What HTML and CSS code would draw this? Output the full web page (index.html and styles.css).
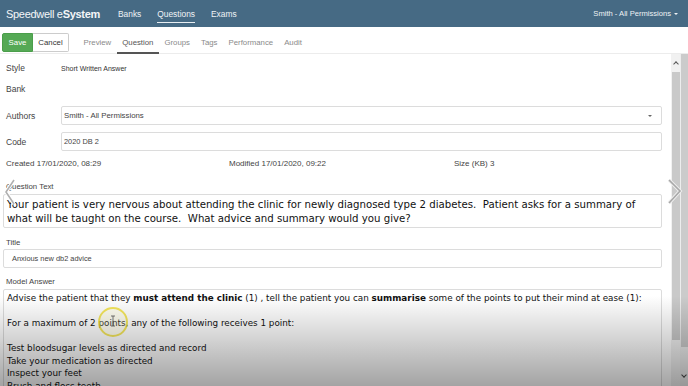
FILE: index.html
```html
<!DOCTYPE html>
<html lang="en">

<head>
    <meta charset="UTF-8">
    <meta name="viewport" content="width=device-width, initial-scale=1.0">
    <title>Speedwell eSystem - Question</title>
    <link rel="stylesheet" href="styles.css">
</head>

<body>
    <header class="navbar">
        <div class="brand">Speedwell <span class="brand-e">e</span><b>System</b></div>
        <nav class="nav-links">
            <a>Banks</a>
            <a class="active">Questions</a>
            <a>Exams</a>
        </nav>
        <div class="user">Smith - All Permissions <span class="caret"></span></div>
    </header>

    <div class="toolbar">
        <div class="btn-group">
            <button class="btn btn-save">Save</button>
            <button class="btn btn-cancel">Cancel</button>
        </div>
        <ul class="tabs">
            <li>Preview</li>
            <li class="active">Question</li>
            <li>Groups</li>
            <li>Tags</li>
            <li>Performance</li>
            <li>Audit</li>
        </ul>
    </div>

    <div class="main">
        <div class="content">
            <div class="row row-style">
                <span class="label">Style</span>
                <span class="value">Short Written Answer</span>
            </div>
            <div class="row row-bank">
                <span class="label">Bank</span>
            </div>
            <div class="row row-field">
                <span class="label">Authors</span>
                <div class="control select">Smith - All Permissions <span class="select-caret"></span></div>
            </div>
            <div class="row row-field">
                <span class="label">Code</span>
                <div class="control">2020 DB 2</div>
            </div>
            <div class="meta">
                <span>Created 17/01/2020, 08:29</span>
                <span>Modified 17/01/2020, 09:22</span>
                <span>Size (KB) 3</span>
            </div>

            <div class="block-label">Question Text</div>
            <div class="editor question-text">Your patient is very nervous about attending the clinic for newly diagnosed type 2 diabetes.&nbsp; Patient asks for a summary of what will be taught on the course.&nbsp; What advice and summary would you give?</div>

            <div class="block-label title-label">Title</div>
            <div class="control wide">Anxious new db2 advice</div>

            <div class="block-label answer-label">Model Answer</div>
            <div class="editor model-answer">
                <p>Advise the patient that they <b>must attend the clinic</b> (1) , tell the patient you can <b>summarise</b> some of the points to put their mind at ease (1):</p>
                <p>For a maximum of 2 points, any of the following receives 1 point:</p>
                <p>Test bloodsugar levels as directed and record<br>Take your medication as directed<br>Inspect your feet<br>Brush and floss teeth</p>
            </div>
        </div>
        <div class="scroll-inner">
            <span class="arrow-up"></span>
            <div class="thumb"></div>
        </div>
        <div class="scroll-outer">
            <div class="thumb"></div>
            <span class="arrow-down"></span>
        </div>
    </div>

    <!-- video overlays -->
    <svg class="chevron chevron-left" width="14" height="28" viewBox="0 0 14 28">
        <polyline points="11,2 3,14 11,26" fill="none" stroke="#fff" stroke-width="3.5" />
        <polyline points="11,2 3,14 11,26" fill="none" stroke="#b0b0b0" stroke-width="1.6" />
    </svg>
    <svg class="chevron chevron-right" width="16" height="28" viewBox="0 0 16 28">
        <polyline points="2,2 13,13 2,25" fill="none" stroke="#eee" stroke-width="3.5" />
        <polyline points="2,2 13,13 2,25" fill="none" stroke="#a8a8a8" stroke-width="1.6" />
    </svg>
    <svg class="cursor-ring" width="34" height="34" viewBox="0 0 34 34">
        <circle cx="17" cy="17" r="14" fill="rgba(255,250,170,0.18)" stroke="rgba(240,222,40,0.75)" stroke-width="2" />
        <path d="M15 11h4M17 11v10M15 21h4" stroke="#555" stroke-width="0.8" fill="none" />
    </svg>
    <div class="shade"></div>
</body>

</html>
```

FILE: styles.css
```css
* {
    box-sizing: border-box;
}

body {
    margin: 0;
    width: 688px;
    height: 386px;
    overflow: hidden;
    position: relative;
    font-family: "Liberation Sans", Arial, sans-serif;
    color: #333;
    background: #fff;
}

/* top bar */
.navbar {
    height: 27px;
    background-color: #466a84;
    display: flex;
    align-items: center;
    padding: 0 10px 0 6px;
    color: #fff;
}

.brand {
    font-size: 11px;
    letter-spacing: -0.3px;
    width: 112px;
    color: #f4f6f8;
}

.brand-e {
    font-weight: normal;
}

.nav-links {
    display: flex;
    gap: 16px;
    font-size: 8.4px;
    height: 27px;
    align-items: center;
}

.nav-links a {
    position: relative;
    color: #f0f3f6;
}

.nav-links a.active::after {
    content: "";
    position: absolute;
    left: 0;
    right: 0;
    top: 13px;
    height: 1px;
    background: #e8eef2;
}

.user {
    margin-left: auto;
    font-size: 7.6px;
    color: #eef2f5;
    display: flex;
    align-items: center;
    gap: 3px;
}

.caret {
    border-left: 2.5px solid transparent;
    border-right: 2.5px solid transparent;
    border-top: 2.5px solid #eef2f5;
}

/* toolbar */
.toolbar {
    height: 27px;
    display: flex;
    align-items: center;
    padding: 4px 0 0 2px;
    border-bottom: 1px solid #ececec;
}

.btn-group {
    display: flex;
}

.btn {
    height: 19px;
    font-family: "Liberation Sans", Arial, sans-serif;
    font-size: 7.8px;
    border: 1px solid #ccc;
    margin: 0;
    padding: 0;
}

.btn-save {
    width: 31px;
    background: #55a955;
    border-color: #4b9e4b;
    color: #fff;
    border-radius: 2px 0 0 2px;
}

.btn-cancel {
    width: 36px;
    background: #fff;
    color: #333;
    border-radius: 0 2px 2px 0;
    border-left: none;
}

.tabs {
    display: flex;
    list-style: none;
    margin: 0 0 0 9px;
    padding: 0;
    height: 23px;
    font-size: 7.8px;
    color: #8a8a8a;
}

.tabs li {
    padding: 0 5.5px;
    display: flex;
    align-items: center;
    height: 23px;
}

.tabs li.active {
    color: #555;
    border-bottom: 2px solid #555;
    padding-top: 2px;
}

/* main area */
.main {
    display: flex;
    height: 332px;
}

.content {
    width: 671px;
    padding: 0 9px 0 3px;
    font-size: 8.5px;
    color: #444;
}

.row {
    display: flex;
    align-items: center;
}

.label {
    width: 58px;
    padding-left: 3px;
    flex-shrink: 0;
}

.value {
    font-size: 7px;
    color: #333;
}

.row-style {
    height: 20px;
    margin-top: 4px;
}

.row-bank {
    height: 20px;
    margin-top: 1px;
}

.row-field {
    margin-top: 7px;
}

.control {
    flex: 1;
    height: 19px;
    border: 1px solid #dcdcdc;
    border-radius: 2px;
    display: flex;
    align-items: center;
    padding-left: 2px;
    font-size: 7.4px;
    color: #444;
    background: #fff;
}

.select {
    font-size: 7.8px;
}

.select-caret {
    margin-left: auto;
    margin-right: 9px;
    border-left: 2.5px solid transparent;
    border-right: 2.5px solid transparent;
    border-top: 2.5px solid #666;
}

.control.wide {
    padding-left: 8px;
    margin-top: 1px;
}

.meta {
    display: grid;
    grid-template-columns: 223px 225px 1fr;
    padding-left: 3px;
    height: 16px;
    margin-top: 4px;
    align-items: center;
    font-size: 8px;
}

.block-label {
    height: 12px;
    margin-top: 9px;
    padding-left: 3px;
    display: flex;
    align-items: center;
    font-size: 7.8px;
}

.title-label {
    margin-top: 8px;
}

.answer-label {
    margin-top: 7px;
}

.editor {
    border: 1px solid #dcdcdc;
    border-radius: 2px;
    font-family: "DejaVu Sans", Verdana, sans-serif;
    color: #111;
    padding: 3px 3px;
    margin-top: 2px;
    white-space: nowrap;
}

.question-text {
    height: 34px;
    font-size: 10.2px;
    line-height: 14px;
    padding-top: 3px;
    white-space: normal;
}

.model-answer {
    height: 110px;
    font-size: 8.8px;
    line-height: 12.5px;
    padding-top: 2px;
}

.model-answer p {
    margin: 0 0 12.5px;
}

/* scrollbars */
.scroll-inner {
    width: 9px;
    background: #f1f1f1;
    display: flex;
    flex-direction: column;
    align-items: center;
}

.scroll-inner .thumb {
    width: 8px;
    height: 268px;
    background: #c9c9c9;
    margin-top: 6px;
}

.arrow-up {
    margin-top: 8px;
    width: 4px;
    height: 4px;
    border-left: 1.3px solid #555;
    border-top: 1.3px solid #555;
    transform: rotate(45deg);
}

.scroll-outer {
    width: 8px;
    background: #ededed;
    display: flex;
    flex-direction: column;
    align-items: center;
}

.scroll-outer .thumb {
    width: 7px;
    height: 293px;
    background: #cbcbcb;
}

.arrow-down {
    margin-top: 26px;
    width: 4px;
    height: 4px;
    border-right: 1.3px solid #444;
    border-bottom: 1.3px solid #444;
    transform: rotate(45deg);
}

/* overlays from the recording */
.chevron {
    position: absolute;
}

.chevron-left {
    left: 3px;
    top: 178px;
}

.chevron-right {
    left: 667px;
    top: 178px;
}

.cursor-ring {
    position: absolute;
    left: 96px;
    top: 305px;
}

.shade {
    position: absolute;
    left: 0;
    right: 0;
    top: 296px;
    bottom: 0;
    background: linear-gradient(to bottom, rgba(0, 0, 0, 0), rgba(0, 0, 0, 0.36));
    pointer-events: none;
}
```
